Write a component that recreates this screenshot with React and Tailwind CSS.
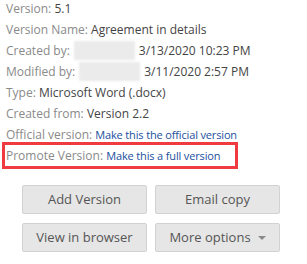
export default function App() {
  const label = "text-[#8a8a8a]";
  const val = "text-[#444444]";
  const link = "text-[#1b4f9e] text-[11px] tracking-[-0.15px]";
  const Blur = () => (
    <span className="w-[61px] h-[19px] bg-[#ebebeb] blur-[1px] rounded-[1px]"></span>
  );
  return (
    <div className="w-[307px] h-[264px] bg-white font-['Open_Sans',sans-serif] text-[12px] leading-[21px] overflow-hidden">
      <div className="pl-[6px] mt-[-2px]">
        <div className="h-[21px]"><span className={label}>Version: </span><span className={val}>5.1</span></div>
        <div className="h-[21px]"><span className={label}>Version Name: </span><span className={val}>Agreement in details</span></div>
        <div className="h-[21px] flex items-center gap-[4px]">
          <span className={label}>Created by:</span>
          <Blur />
          <span className={val}>3/13/2020 10:23 PM</span>
        </div>
        <div className="h-[21px] flex items-center gap-[4px]">
          <span className={label}>Modified by:</span>
          <Blur />
          <span className={val}>3/11/2020 2:57 PM</span>
        </div>
        <div className="h-[21px]"><span className={label}>Type: </span><span className={val}>Microsoft Word (.docx)</span></div>
        <div className="h-[21px]"><span className={label}>Created from: </span><span className={val}>Version 2.2</span></div>
        <div className="h-[21px] whitespace-nowrap"><span className={label}>Official version: </span><span className={link}>Make this the official version</span></div>
      </div>
      <div className="ml-[2px] mt-[-3px] w-[236px] h-[27px] border-[3px] border-[#ef3b3f] pl-[1px] whitespace-nowrap">
        <span className={label}>Promote Version: </span><span className={link}>Make this a full version</span>
      </div>
      <div className="grid grid-cols-[125px_125px] gap-x-[8px] gap-y-[9px] ml-[22px] mt-[16px]">
        {["Add Version", "Email copy", "View in browser"].map((t) => (
          <button key={t} className="h-[29px] bg-[#e6e6e6] border border-[#d2d2d2] rounded-[2px] text-[#555555] text-[13px] leading-none">{t}</button>
        ))}
        <button className="h-[29px] bg-[#e6e6e6] border border-[#d2d2d2] rounded-[2px] text-[#555555] text-[13px] leading-none flex items-center justify-center gap-[7px]">
          More options
          <span className="w-0 h-0 border-l-[4px] border-r-[4px] border-t-[4px] border-l-transparent border-r-transparent border-t-[#8a8a8a]"></span>
        </button>
      </div>
    </div>
  );
}
